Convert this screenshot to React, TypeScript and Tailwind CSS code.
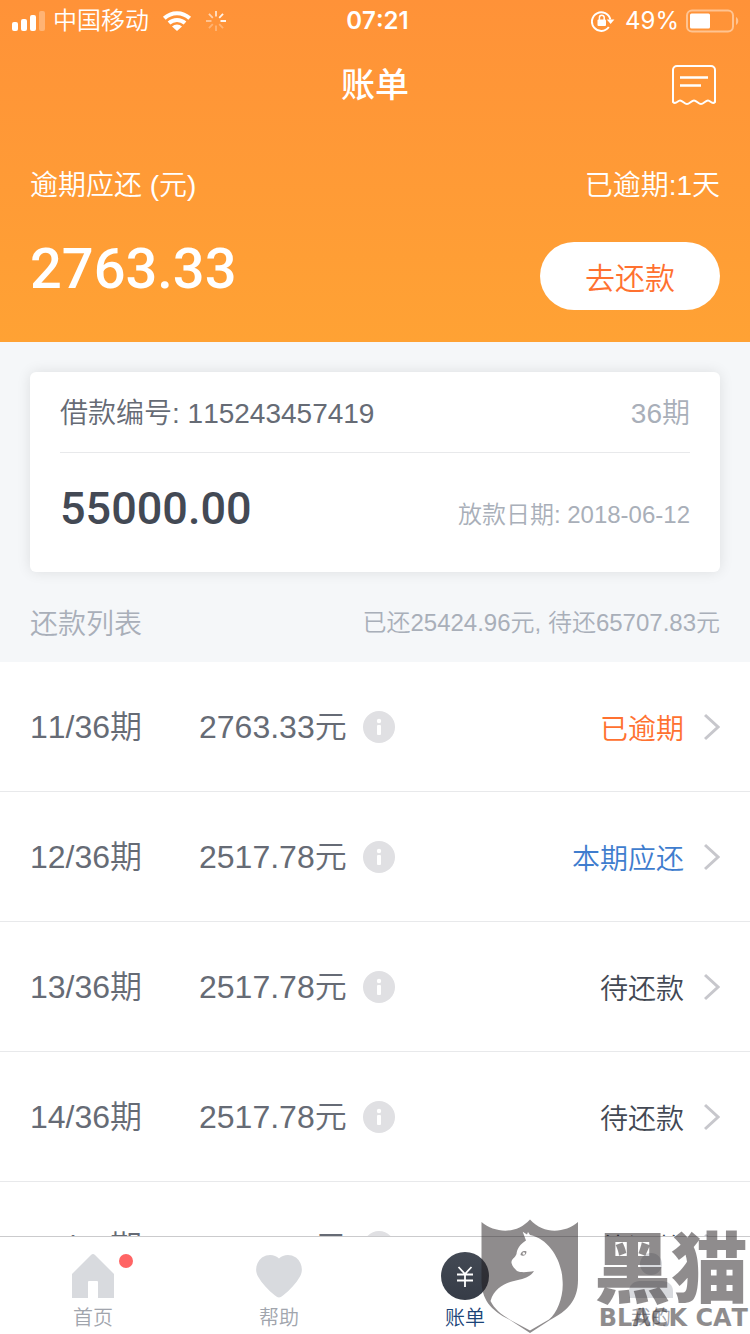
import { useState } from 'react';
import clsx from 'clsx';

type Status = 'overdue' | 'due' | 'pending';

interface Installment {
  no: number;
  amount: string;
  status: Status;
}

const TOTAL = 36;

const INSTALLMENTS: Installment[] = [
  { no: 11, amount: '2763.33', status: 'overdue' },
  { no: 12, amount: '2517.78', status: 'due' },
  { no: 13, amount: '2517.78', status: 'pending' },
  { no: 14, amount: '2517.78', status: 'pending' },
  { no: 15, amount: '2517.78', status: 'pending' },
];

const STATUS: Record<Status, { label: string; className: string }> = {
  overdue: { label: '已逾期', className: 'text-[#ff7130]' },
  due: { label: '本期应还', className: 'text-[#3f7dce]' },
  pending: { label: '待还款', className: 'text-[#434954]' },
};

export default function App() {
  return (
    <div className="relative flex h-screen flex-col overflow-hidden bg-[#f5f7f9] font-['Liberation_Sans','Noto_Sans_CJK_SC',sans-serif] font-[350] text-[#666b75] [font-kerning:none]">
      <header className="shrink-0 bg-linear-to-b from-[#ff9238] to-[#ffa234] text-white">
        <StatusBar />
        <div className="grid h-[88px] grid-cols-3 items-center px-8 pt-0.5">
          <h1 className="col-start-2 text-center text-[34px] font-medium">
            账单
          </h1>
          <button type="button" aria-label="账单记录" className="justify-self-end">
            <ReceiptIcon />
          </button>
        </div>
        <div className="flex items-center justify-between px-[30px] pt-9 text-[28px] leading-[44px]">
          <span>逾期应还 (元)</span>
          <span>已逾期:1天</span>
        </div>
        <div className="flex items-start justify-between px-[30px] pb-8 pt-[34px]">
          <strong className="font-[Roboto] text-[56px] font-medium leading-[54px]">
            2763.33
          </strong>
          <button
            type="button"
            className="h-[68px] w-[180px] rounded-full bg-white pt-1 text-[30px] text-[#ff7130]"
          >
            去还款
          </button>
        </div>
      </header>

      <section className="mx-[30px] mt-[30px] shrink-0 rounded-md bg-white px-[30px] shadow-[0_0_14px_rgba(0,0,0,0.1)]">
        <div className="flex h-[81px] items-center justify-between border-b border-[#e8e9eb] pt-1 text-[28px]">
          <span>借款编号: 115243457419</span>
          <span className="text-[#a9afb9]">{TOTAL}期</span>
        </div>
        <div className="flex h-[119px] items-center justify-between pb-2">
          <strong className="font-[Roboto] text-[45px] font-medium text-[#434954]">
            55000.00
          </strong>
          <span className="pt-3 text-2xl text-[#a9afb9]">
            放款日期: 2018-06-12
          </span>
        </div>
      </section>

      <div className="flex shrink-0 items-center justify-between px-[30px] pb-4 pt-8 text-[#a9afb9]">
        <h2 className="text-[28px] leading-[42px]">还款列表</h2>
        <span className="pb-1 text-2xl">已还25424.96元, 待还65707.83元</span>
      </div>

      <ul className="min-h-0 flex-1 overflow-hidden bg-white">
        {INSTALLMENTS.map((item) => (
          <InstallmentRow key={item.no} item={item} />
        ))}
      </ul>

      <TabBar />
      <Watermark />
    </div>
  );
}

function StatusBar() {
  return (
    <div className="grid h-10 grid-cols-3 items-center pl-3 pr-[11px] pt-0.5 text-2xl">
      <div className="flex items-center gap-2">
        <svg width="33" height="20" viewBox="0 0 33 20" fill="currentColor">
          <rect x="0" y="11" width="6" height="9" rx="2" />
          <rect x="9" y="8" width="6" height="12" rx="2" />
          <rect x="18" y="4" width="6" height="16" rx="2" />
          <rect x="27" y="0" width="6" height="20" rx="2" opacity=".3" />
        </svg>
        <span className="whitespace-nowrap">中国移动</span>
        <svg
          width="40"
          height="22"
          viewBox="0 0 40 22"
          fill="none"
          stroke="currentColor"
          strokeWidth="4"
        >
          <path d="M7.300 8.200a18.500 18.500 0 0 1 25.400 0" />
          <path d="M12 13a12 12 0 0 1 16 0" />
          <path d="M15 16.500a7.500 7.500 0 0 1 10 0l-5 4.500z" fill="currentColor" stroke="none" />
        </svg>
        <Spinner />
      </div>
      <span className="pl-1 text-center font-[Inter] font-semibold">07:21</span>
      <div className="flex items-center justify-end gap-1.5">
        <svg width="24" height="22" viewBox="0 0 24 22" fill="none" stroke="currentColor">
          <path d="M17.800 17A9.300 9.300 0 1 1 19.300 9.500" strokeWidth="2" />
          <path d="M15.800 9.500h7.600l-3.800 4.500z" fill="currentColor" stroke="none" />
          <rect x="6.500" y="9.500" width="8.500" height="6.500" rx="1" fill="currentColor" stroke="none" />
          <path d="M8.400 10V7.600a2.400 2.400 0 0 1 4.800 0V10" strokeWidth="1.500" />
        </svg>
        <span className="pl-1 font-[Inter] font-normal">49%</span>
        <svg width="54" height="24" viewBox="0 0 54 24" fill="none">
          <rect x="2" y="1.500" width="46" height="21" rx="5" stroke="#fff" strokeOpacity=".45" strokeWidth="2" />
          <rect x="5" y="4.500" width="20" height="15" rx="1.500" fill="#fff" />
          <path d="M51 8c3 1.500 3 6.500 0 8z" fill="#fff" fillOpacity=".45" />
        </svg>
      </div>
    </div>
  );
}

function Spinner() {
  return (
    <svg width="22" height="22" viewBox="-11 -11 22 22" stroke="#fff" strokeWidth="1.800">
      {[1, 0.3, 0.3, 0.3, 0.5, 0.6, 0.75, 0.9].map((opacity, i) => (
        <path
          key={i}
          d="M4.500 0H10"
          opacity={opacity}
          transform={`rotate(${i * 45})`}
        />
      ))}
    </svg>
  );
}

function ReceiptIcon() {
  return (
    <svg width="48" height="42" viewBox="0 0 48 42" fill="none" stroke="currentColor" strokeWidth="2">
      <path
        d="M3 38V6a4 4 0 0 1 4-4h34a4 4 0 0 1 4 4v32c-3 3-4.500-1.500-7-1.500s-4.500 3.500-7 3.500-4.500-3.500-7-3.500-4.500 3.500-7 3.500-4.500-3.500-7-3.500-4 4.500-7 1.500z"
        strokeLinejoin="round"
      />
      <path d="M10 13.500h28M10 21.500h21" strokeWidth="2.500" />
    </svg>
  );
}

function InstallmentRow({ item }: { item: Installment }) {
  const status = STATUS[item.status];
  return (
    <li className="flex h-[130px] items-center border-b border-[#e8e9eb] px-[30px]">
      <span className="w-[169px] text-[32px]">
        {item.no}/{TOTAL}期
      </span>
      <span className="w-[164px] text-[32px]">{item.amount}元</span>
      <button type="button" aria-label="详情">
        <svg width="32" height="32" viewBox="0 0 32 32">
          <circle cx="16" cy="16" r="16" fill="#e0e0e3" />
          <circle cx="16" cy="10" r="2.200" fill="#fff" />
          <rect x="14" y="14" width="4" height="10" rx="1" fill="#fff" />
        </svg>
      </button>
      <a href="#" className="ml-auto flex items-center gap-5">
        <span className={clsx('pt-1.5 text-[28px]', status.className)}>
          {status.label}
        </span>
        <svg width="16" height="28" viewBox="0 0 16 28" fill="none" stroke="#c7c7cc" strokeWidth="3">
          <path d="M1 2l13 12L1 26" />
        </svg>
      </a>
    </li>
  );
}

const TABS = [
  { id: 'home', label: '首页', Icon: HomeIcon, badge: true },
  { id: 'help', label: '帮助', Icon: HeartIcon, badge: false },
  { id: 'bill', label: '账单', Icon: YenIcon, badge: false },
  { id: 'mine', label: '我的', Icon: UserIcon, badge: false },
];

function TabBar() {
  const [active, setActive] = useState('bill');
  return (
    <nav className="grid h-[98px] shrink-0 grid-cols-4 border-t border-[#cbcbcd] bg-white pr-1.5">
      {TABS.map(({ id, label, Icon, badge }) => (
        <button
          key={id}
          type="button"
          onClick={() => setActive(id)}
          className={clsx(
            'flex flex-col items-center pt-[15px] text-xl',
            active === id ? 'text-[#1b4478]' : 'text-[#a1a5ad]',
          )}
        >
          <span className="relative">
            <Icon />
            {badge && (
              <span className="absolute -right-4 top-0.5 size-3.5 rounded-full bg-[#ff6464]" />
            )}
          </span>
          <span className="leading-9">{label}</span>
        </button>
      ))}
    </nav>
  );
}

function HomeIcon() {
  return (
    <svg width="48" height="48" viewBox="0 0 48 48" fill="#d8dade">
      <path d="M3 22 22 3q2-2 4 0L45 22v24H29V30q0-1-1-1h-8q-1 0-1 1v16H3z" />
    </svg>
  );
}

function HeartIcon() {
  return (
    <svg width="48" height="48" viewBox="0 0 48 48" fill="#d8dade">
      <path d="M24 6.500C28 2.500 35 1.500 41 5.500c6 5 7.500 13 4 19-4 7-10 13.500-17 19-3 2.500-5 2.500-8 0C13 38 7 31.500 3 24.500c-3.500-6-2-14 4-19 6-4 13-3 17 1z" />
    </svg>
  );
}

function YenIcon() {
  return (
    <svg width="48" height="48" viewBox="0 0 48 48">
      <defs>
        <linearGradient id="yen" x1="0" y1="0" x2="0" y2="1">
          <stop offset="0" stopColor="#434954" />
          <stop offset="1" stopColor="#363c47" />
        </linearGradient>
      </defs>
      <circle cx="24" cy="24" r="24" fill="url(#yen)" />
      <path
        d="M17.500 15l6.500 7 6.500-7M16 22.500h16M16 28.500h16M24 22v13"
        fill="none"
        stroke="#fff"
        strokeWidth="1.800"
      />
    </svg>
  );
}

function UserIcon() {
  return (
    <svg width="48" height="48" viewBox="0 0 48 48" fill="#d8dade">
      <circle cx="24" cy="12" r="11" />
      <path d="M2 46V39c0-6 5-10 11-10h22c6 0 11 4 11 10v7z" />
    </svg>
  );
}

// Translucent stamp lying over the bottom right corner of the page.
function Watermark() {
  return (
    <div className="pointer-events-none absolute bottom-0 right-0 flex items-end gap-3.5 pr-0.5 text-[#221c1e] opacity-50">
      <svg width="100" height="116" viewBox="10 18 100 116" fill="currentColor">
        <path
          fillRule="evenodd"
          d="M11.500 22C25 33 46 35 60 19.500 74 35 95 33 108 22V80C108 101 97 111 80 120L60 133 40 120C20 110 11.500 99 11.500 80zM52.700 31.700 56 40.500C50 44 47 49 46.500 54 45 58 41 59 41.500 63 42 66 45 69 47 71 51 73 59 72 64 71 61 76 56 78 50 79.500 38 82 25 86 20.500 101 25 110 33 116 45 122.500L60 130.500 79 119.500C88 112 94 95 92.500 80 92 62 80 39 60 35L58 32 57 34.500z"
        />
        <path
          fillRule="evenodd"
          d="M50.500 55c0-3 3-5 6-3.500 0 3.500-3 5.500-6 3.500zm2-1.500a1.300 1.300 0 1 0 2.600 0 1.300 1.300 0 1 0-2.600 0z"
        />
      </svg>
      <div className="flex flex-col items-end">
        <span className="font-['Noto_Sans_CJK_SC',sans-serif] text-[77px] font-black leading-[76px]">
          黑猫
        </span>
        <span className="whitespace-nowrap font-['DejaVu_Sans',sans-serif] text-2xl font-bold leading-8">
          BLACK CAT
        </span>
      </div>
    </div>
  );
}
